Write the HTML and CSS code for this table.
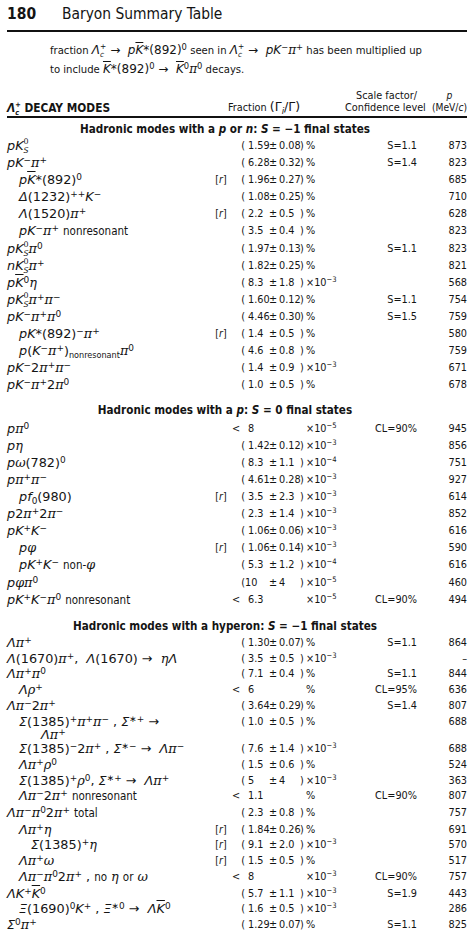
FILE: index.html
```html
<!DOCTYPE html>
<html lang="en">
<head>
<meta charset="utf-8">
<title>Baryon Summary Table</title>
<link rel="stylesheet" href="styles.css">
</head>
<body>
<div class="page">
  <header class="running"><span class="pgno">180</span><span class="ptitle">Baryon Summary Table</span></header>

  <p class="note">fraction <span class="m"><var>Λ</var><span class="ss"><span>+</span><var>c</var></span> → &nbsp;<var>p</var><var class="bar">K</var>*(892)<sup>0</sup></span> seen in <span class="m"><var>Λ</var><span class="ss"><span>+</span><var>c</var></span> → &nbsp;<var>p</var><var>K</var><sup>−</sup><i>π</i><sup>+</sup></span> has been multiplied up<br>to include <span class="m"><var class="bar">K</var>*(892)<sup>0</sup> → &nbsp;<var class="bar">K</var><sup>0</sup><i>π</i><sup>0</sup></span> decays.</p>

  <div class="thead">
    <div class="h-mode"><var>Λ</var><span class="ss"><span>+</span><var>c</var></span> DECAY MODES</div>
    <div class="h-frac">Fraction <span class="hm">(Γ<sub><var>i</var></sub>/Γ)</span></div>
    <div class="h-sc">Scale factor/<br>Confidence level</div>
    <div class="h-p"><span class="stack"><var>p</var><br>(MeV/<var>c</var>)</span></div>
  </div>

  <section class="sec s1">
    <h2>Hadronic modes with a <var>p</var> or <var>n</var>: <var>S</var> = −1 final states</h2>

    <div class="row"><div class="mode"><var>p</var><var>K</var><span class="ss"><span>0</span><var>S</var></span></div><div class="r"></div><div class="frac"><span class="o">(</span><span class="v">1.59</span><span class="pm">±</span><span class="e">0.08</span><span class="c">)</span><span class="u">%</span></div><div class="sc">S=1.1</div><div class="pc">873</div></div>

    <div class="row"><div class="mode"><var>p</var><var>K</var><sup>−</sup><i>π</i><sup>+</sup></div><div class="r"></div><div class="frac"><span class="o">(</span><span class="v">6.28</span><span class="pm">±</span><span class="e">0.32</span><span class="c">)</span><span class="u">%</span></div><div class="sc">S=1.4</div><div class="pc">823</div></div>

    <div class="row"><div class="mode l1"><var>p</var><var class="bar">K</var>*(892)<sup>0</sup></div><div class="r">[<var>r</var>]</div><div class="frac"><span class="o">(</span><span class="v">1.96</span><span class="pm">±</span><span class="e">0.27</span><span class="c">)</span><span class="u">%</span></div><div class="sc"></div><div class="pc">685</div></div>

    <div class="row"><div class="mode l1"><var>Δ</var>(1232)<sup>++</sup><var>K</var><sup>−</sup></div><div class="r"></div><div class="frac"><span class="o">(</span><span class="v">1.08</span><span class="pm">±</span><span class="e">0.25</span><span class="c">)</span><span class="u">%</span></div><div class="sc"></div><div class="pc">710</div></div>

    <div class="row"><div class="mode l1"><var>Λ</var>(1520)<i>π</i><sup>+</sup></div><div class="r">[<var>r</var>]</div><div class="frac"><span class="o">(</span><span class="v">2.2</span><span class="pm">±</span><span class="e">0.5</span><span class="c">)</span><span class="u">%</span></div><div class="sc"></div><div class="pc">628</div></div>

    <div class="row"><div class="mode l1"><var>p</var><var>K</var><sup>−</sup><i>π</i><sup>+</sup> <span class="t">nonresonant</span></div><div class="r"></div><div class="frac"><span class="o">(</span><span class="v">3.5</span><span class="pm">±</span><span class="e">0.4</span><span class="c">)</span><span class="u">%</span></div><div class="sc"></div><div class="pc">823</div></div>

    <div class="row"><div class="mode"><var>p</var><var>K</var><span class="ss"><span>0</span><var>S</var></span><i>π</i><sup>0</sup></div><div class="r"></div><div class="frac"><span class="o">(</span><span class="v">1.97</span><span class="pm">±</span><span class="e">0.13</span><span class="c">)</span><span class="u">%</span></div><div class="sc">S=1.1</div><div class="pc">823</div></div>

    <div class="row"><div class="mode"><var>n</var><var>K</var><span class="ss"><span>0</span><var>S</var></span><i>π</i><sup>+</sup></div><div class="r"></div><div class="frac"><span class="o">(</span><span class="v">1.82</span><span class="pm">±</span><span class="e">0.25</span><span class="c">)</span><span class="u">%</span></div><div class="sc"></div><div class="pc">821</div></div>

    <div class="row"><div class="mode"><var>p</var><var class="bar">K</var><sup>0</sup><i>η</i></div><div class="r"></div><div class="frac"><span class="o">(</span><span class="v">8.3</span><span class="pm">±</span><span class="e">1.8</span><span class="c">)</span><span class="u">×10<sup>−3</sup></span></div><div class="sc"></div><div class="pc">568</div></div>

    <div class="row"><div class="mode"><var>p</var><var>K</var><span class="ss"><span>0</span><var>S</var></span><i>π</i><sup>+</sup><i>π</i><sup>−</sup></div><div class="r"></div><div class="frac"><span class="o">(</span><span class="v">1.60</span><span class="pm">±</span><span class="e">0.12</span><span class="c">)</span><span class="u">%</span></div><div class="sc">S=1.1</div><div class="pc">754</div></div>

    <div class="row"><div class="mode"><var>p</var><var>K</var><sup>−</sup><i>π</i><sup>+</sup><i>π</i><sup>0</sup></div><div class="r"></div><div class="frac"><span class="o">(</span><span class="v">4.46</span><span class="pm">±</span><span class="e">0.30</span><span class="c">)</span><span class="u">%</span></div><div class="sc">S=1.5</div><div class="pc">759</div></div>

    <div class="row"><div class="mode l1"><var>p</var><var>K</var>*(892)<sup>−</sup><i>π</i><sup>+</sup></div><div class="r">[<var>r</var>]</div><div class="frac"><span class="o">(</span><span class="v">1.4</span><span class="pm">±</span><span class="e">0.5</span><span class="c">)</span><span class="u">%</span></div><div class="sc"></div><div class="pc">580</div></div>

    <div class="row"><div class="mode l1"><var>p</var>(<var>K</var><sup>−</sup><i>π</i><sup>+</sup>)<sub class="t">nonresonant</sub><i>π</i><sup>0</sup></div><div class="r"></div><div class="frac"><span class="o">(</span><span class="v">4.6</span><span class="pm">±</span><span class="e">0.8</span><span class="c">)</span><span class="u">%</span></div><div class="sc"></div><div class="pc">759</div></div>

    <div class="row"><div class="mode"><var>p</var><var>K</var><sup>−</sup>2<i>π</i><sup>+</sup><i>π</i><sup>−</sup></div><div class="r"></div><div class="frac"><span class="o">(</span><span class="v">1.4</span><span class="pm">±</span><span class="e">0.9</span><span class="c">)</span><span class="u">×10<sup>−3</sup></span></div><div class="sc"></div><div class="pc">671</div></div>

    <div class="row"><div class="mode"><var>p</var><var>K</var><sup>−</sup><i>π</i><sup>+</sup>2<i>π</i><sup>0</sup></div><div class="r"></div><div class="frac"><span class="o">(</span><span class="v">1.0</span><span class="pm">±</span><span class="e">0.5</span><span class="c">)</span><span class="u">%</span></div><div class="sc"></div><div class="pc">678</div></div>
  </section>

  <section class="sec s2">
    <h2>Hadronic modes with a <var>p</var>: <var>S</var> = 0 final states</h2>

    <div class="row"><div class="mode"><var>p</var><i>π</i><sup>0</sup></div><div class="r"></div><div class="frac"><span class="o lt">&lt;</span><span class="v">8</span><span class="pm"></span><span class="e"></span><span class="c"></span><span class="u">×10<sup>−5</sup></span></div><div class="sc">CL=90%</div><div class="pc">945</div></div>

    <div class="row"><div class="mode"><var>p</var><i>η</i></div><div class="r"></div><div class="frac"><span class="o">(</span><span class="v">1.42</span><span class="pm">±</span><span class="e">0.12</span><span class="c">)</span><span class="u">×10<sup>−3</sup></span></div><div class="sc"></div><div class="pc">856</div></div>

    <div class="row"><div class="mode"><var>p</var><i>ω</i>(782)<sup>0</sup></div><div class="r"></div><div class="frac"><span class="o">(</span><span class="v">8.3</span><span class="pm">±</span><span class="e">1.1</span><span class="c">)</span><span class="u">×10<sup>−4</sup></span></div><div class="sc"></div><div class="pc">751</div></div>

    <div class="row"><div class="mode"><var>p</var><i>π</i><sup>+</sup><i>π</i><sup>−</sup></div><div class="r"></div><div class="frac"><span class="o">(</span><span class="v">4.61</span><span class="pm">±</span><span class="e">0.28</span><span class="c">)</span><span class="u">×10<sup>−3</sup></span></div><div class="sc"></div><div class="pc">927</div></div>

    <div class="row"><div class="mode l1"><var>p</var><var>f</var><sub>0</sub>(980)</div><div class="r">[<var>r</var>]</div><div class="frac"><span class="o">(</span><span class="v">3.5</span><span class="pm">±</span><span class="e">2.3</span><span class="c">)</span><span class="u">×10<sup>−3</sup></span></div><div class="sc"></div><div class="pc">614</div></div>

    <div class="row"><div class="mode"><var>p</var>2<i>π</i><sup>+</sup>2<i>π</i><sup>−</sup></div><div class="r"></div><div class="frac"><span class="o">(</span><span class="v">2.3</span><span class="pm">±</span><span class="e">1.4</span><span class="c">)</span><span class="u">×10<sup>−3</sup></span></div><div class="sc"></div><div class="pc">852</div></div>

    <div class="row"><div class="mode"><var>p</var><var>K</var><sup>+</sup><var>K</var><sup>−</sup></div><div class="r"></div><div class="frac"><span class="o">(</span><span class="v">1.06</span><span class="pm">±</span><span class="e">0.06</span><span class="c">)</span><span class="u">×10<sup>−3</sup></span></div><div class="sc"></div><div class="pc">616</div></div>

    <div class="row"><div class="mode l1"><var>p</var><i>φ</i></div><div class="r">[<var>r</var>]</div><div class="frac"><span class="o">(</span><span class="v">1.06</span><span class="pm">±</span><span class="e">0.14</span><span class="c">)</span><span class="u">×10<sup>−3</sup></span></div><div class="sc"></div><div class="pc">590</div></div>

    <div class="row"><div class="mode l1"><var>p</var><var>K</var><sup>+</sup><var>K</var><sup>−</sup> <span class="t">non-</span><i>φ</i></div><div class="r"></div><div class="frac"><span class="o">(</span><span class="v">5.3</span><span class="pm">±</span><span class="e">1.2</span><span class="c">)</span><span class="u">×10<sup>−4</sup></span></div><div class="sc"></div><div class="pc">616</div></div>

    <div class="row"><div class="mode"><var>p</var><i>φ</i><i>π</i><sup>0</sup></div><div class="r"></div><div class="frac"><span class="o">(</span><span class="v w2">10</span><span class="pm">±</span><span class="e">4</span><span class="c">)</span><span class="u">×10<sup>−5</sup></span></div><div class="sc"></div><div class="pc">460</div></div>

    <div class="row"><div class="mode"><var>p</var><var>K</var><sup>+</sup><var>K</var><sup>−</sup><i>π</i><sup>0</sup> <span class="t">nonresonant</span></div><div class="r"></div><div class="frac"><span class="o lt">&lt;</span><span class="v">6.3</span><span class="pm"></span><span class="e"></span><span class="c"></span><span class="u">×10<sup>−5</sup></span></div><div class="sc">CL=90%</div><div class="pc">494</div></div>
  </section>

  <section class="sec s3">
    <h2>Hadronic modes with a hyperon: <var>S</var> = −1 final states</h2>

    <div class="row"><div class="mode"><var>Λ</var><i>π</i><sup>+</sup></div><div class="r"></div><div class="frac"><span class="o">(</span><span class="v">1.30</span><span class="pm">±</span><span class="e">0.07</span><span class="c">)</span><span class="u">%</span></div><div class="sc">S=1.1</div><div class="pc">864</div></div>

    <div class="row"><div class="mode"><var>Λ</var>(1670)<i>π</i><sup>+</sup>, &nbsp;<var>Λ</var>(1670) → &nbsp;<i>η</i><var>Λ</var></div><div class="r"></div><div class="frac"><span class="o">(</span><span class="v">3.5</span><span class="pm">±</span><span class="e">0.5</span><span class="c">)</span><span class="u">×10<sup>−3</sup></span></div><div class="sc"></div><div class="pc">–</div></div>

    <div class="row"><div class="mode"><var>Λ</var><i>π</i><sup>+</sup><i>π</i><sup>0</sup></div><div class="r"></div><div class="frac"><span class="o">(</span><span class="v">7.1</span><span class="pm">±</span><span class="e">0.4</span><span class="c">)</span><span class="u">%</span></div><div class="sc">S=1.1</div><div class="pc">844</div></div>

    <div class="row"><div class="mode l1"><var>Λ</var><i>ρ</i><sup>+</sup></div><div class="r"></div><div class="frac"><span class="o lt">&lt;</span><span class="v">6</span><span class="pm"></span><span class="e"></span><span class="c"></span><span class="u">%</span></div><div class="sc">CL=95%</div><div class="pc">636</div></div>

    <div class="row"><div class="mode"><var>Λ</var><i>π</i><sup>−</sup>2<i>π</i><sup>+</sup></div><div class="r"></div><div class="frac"><span class="o">(</span><span class="v">3.64</span><span class="pm">±</span><span class="e">0.29</span><span class="c">)</span><span class="u">%</span></div><div class="sc">S=1.4</div><div class="pc">807</div></div>

    <div class="row"><div class="mode l1"><var>Σ</var>(1385)<sup>+</sup><i>π</i><sup>+</sup><i>π</i><sup>−</sup> , <var>Σ</var><sup>∗+</sup> → <span class="cont"><var>Λ</var><i>π</i><sup>+</sup></span></div><div class="r"></div><div class="frac"><span class="o">(</span><span class="v">1.0</span><span class="pm">±</span><span class="e">0.5</span><span class="c">)</span><span class="u">%</span></div><div class="sc"></div><div class="pc">688</div></div>

    <div class="row"><div class="mode l1"><var>Σ</var>(1385)<sup>−</sup>2<i>π</i><sup>+</sup> , <var>Σ</var><sup>∗−</sup> → &nbsp;<var>Λ</var><i>π</i><sup>−</sup></div><div class="r"></div><div class="frac"><span class="o">(</span><span class="v">7.6</span><span class="pm">±</span><span class="e">1.4</span><span class="c">)</span><span class="u">×10<sup>−3</sup></span></div><div class="sc"></div><div class="pc">688</div></div>

    <div class="row"><div class="mode l1"><var>Λ</var><i>π</i><sup>+</sup><i>ρ</i><sup>0</sup></div><div class="r"></div><div class="frac"><span class="o">(</span><span class="v">1.5</span><span class="pm">±</span><span class="e">0.6</span><span class="c">)</span><span class="u">%</span></div><div class="sc"></div><div class="pc">524</div></div>

    <div class="row"><div class="mode l1"><var>Σ</var>(1385)<sup>+</sup><i>ρ</i><sup>0</sup>, <var>Σ</var><sup>∗+</sup> → &nbsp;<var>Λ</var><i>π</i><sup>+</sup></div><div class="r"></div><div class="frac"><span class="o">(</span><span class="v">5</span><span class="pm">±</span><span class="e">4</span><span class="c">)</span><span class="u">×10<sup>−3</sup></span></div><div class="sc"></div><div class="pc">363</div></div>

    <div class="row"><div class="mode l1"><var>Λ</var><i>π</i><sup>−</sup>2<i>π</i><sup>+</sup> <span class="t">nonresonant</span></div><div class="r"></div><div class="frac"><span class="o lt">&lt;</span><span class="v">1.1</span><span class="pm"></span><span class="e"></span><span class="c"></span><span class="u">%</span></div><div class="sc">CL=90%</div><div class="pc">807</div></div>

    <div class="row"><div class="mode"><var>Λ</var><i>π</i><sup>−</sup><i>π</i><sup>0</sup>2<i>π</i><sup>+</sup> <span class="t">total</span></div><div class="r"></div><div class="frac"><span class="o">(</span><span class="v">2.3</span><span class="pm">±</span><span class="e">0.8</span><span class="c">)</span><span class="u">%</span></div><div class="sc"></div><div class="pc">757</div></div>

    <div class="row"><div class="mode l1"><var>Λ</var><i>π</i><sup>+</sup><i>η</i></div><div class="r">[<var>r</var>]</div><div class="frac"><span class="o">(</span><span class="v">1.84</span><span class="pm">±</span><span class="e">0.26</span><span class="c">)</span><span class="u">%</span></div><div class="sc"></div><div class="pc">691</div></div>

    <div class="row"><div class="mode l2"><var>Σ</var>(1385)<sup>+</sup><i>η</i></div><div class="r">[<var>r</var>]</div><div class="frac"><span class="o">(</span><span class="v">9.1</span><span class="pm">±</span><span class="e">2.0</span><span class="c">)</span><span class="u">×10<sup>−3</sup></span></div><div class="sc"></div><div class="pc">570</div></div>

    <div class="row"><div class="mode l1"><var>Λ</var><i>π</i><sup>+</sup><i>ω</i></div><div class="r">[<var>r</var>]</div><div class="frac"><span class="o">(</span><span class="v">1.5</span><span class="pm">±</span><span class="e">0.5</span><span class="c">)</span><span class="u">%</span></div><div class="sc"></div><div class="pc">517</div></div>

    <div class="row"><div class="mode l1"><var>Λ</var><i>π</i><sup>−</sup><i>π</i><sup>0</sup>2<i>π</i><sup>+</sup> , <span class="t">no</span> <i>η</i> <span class="t">or</span> <i>ω</i></div><div class="r"></div><div class="frac"><span class="o lt">&lt;</span><span class="v">8</span><span class="pm"></span><span class="e"></span><span class="c"></span><span class="u">×10<sup>−3</sup></span></div><div class="sc">CL=90%</div><div class="pc">757</div></div>

    <div class="row"><div class="mode"><var>Λ</var><var>K</var><sup>+</sup><var class="bar">K</var><sup>0</sup></div><div class="r"></div><div class="frac"><span class="o">(</span><span class="v">5.7</span><span class="pm">±</span><span class="e">1.1</span><span class="c">)</span><span class="u">×10<sup>−3</sup></span></div><div class="sc">S=1.9</div><div class="pc">443</div></div>

    <div class="row"><div class="mode l1"><var>Ξ</var>(1690)<sup>0</sup><var>K</var><sup>+</sup> , <var>Ξ</var><sup>∗0</sup> → &nbsp;<var>Λ</var><var class="bar">K</var><sup>0</sup></div><div class="r"></div><div class="frac"><span class="o">(</span><span class="v">1.6</span><span class="pm">±</span><span class="e">0.5</span><span class="c">)</span><span class="u">×10<sup>−3</sup></span></div><div class="sc"></div><div class="pc">286</div></div>

    <div class="row"><div class="mode"><var>Σ</var><sup>0</sup><i>π</i><sup>+</sup></div><div class="r"></div><div class="frac"><span class="o">(</span><span class="v">1.29</span><span class="pm">±</span><span class="e">0.07</span><span class="c">)</span><span class="u">%</span></div><div class="sc">S=1.1</div><div class="pc">825</div></div>
  </section>
</div>
</body>
</html>
```

FILE: styles.css
```css
:root {
  --row: 17px;
  --cols: 205px 18px 115px 72px 50px;
}

* { box-sizing: border-box; }

html, body {
  margin: 0;
  background: #ffffff;
}

body {
  color: #141414;
  font-family: "DejaVu Sans Condensed", "DejaVu Sans", sans-serif;
  font-stretch: condensed;
  font-size: 10.8px;
}

.page {
  width: 474px;
  height: 932px;
  padding: 0 7px;
  overflow: hidden;
}

/* running head */
.running {
  display: flex;
  align-items: baseline;
  height: 32px;
  padding-top: 6px;
  line-height: 17px;
  border-bottom: 2px solid #111;
}
.pgno {
  width: 55px;
  font-weight: bold;
  font-size: 15.5px;
}
.ptitle {
  font-size: 15.4px;
}

/* note paragraph */
.note {
  margin: 0 0 0 43px;
  padding-top: 9px;
  line-height: 19px;
  font-size: 11.2px;
}

/* math runs */
.m, .mode, .hm {
  font-family: "DejaVu Sans", sans-serif;
  font-stretch: normal;
}
.m { font-size: 12px; }
.hm { font-size: 12.5px; }

var {
  font-style: oblique;
}
i {
  font-family: "DejaVu Serif", serif;
  font-style: italic;
}
.bar {
  text-decoration: overline;
  text-decoration-thickness: 1px;
}
sup {
  font-size: 70%;
  line-height: 0;
  vertical-align: 0.5em;
}
sub {
  font-size: 70%;
  line-height: 0;
  vertical-align: -0.3em;
}
.ss {
  display: inline-flex;
  flex-direction: column;
  font-size: 62%;
  line-height: 1.06;
  vertical-align: middle;
  margin: -1.1em 0;
}

.t {
  font-family: "DejaVu Sans Condensed", "DejaVu Sans", sans-serif;
  font-stretch: condensed;
  font-size: 11.5px;
}
sub.t { font-size: 9px; }

/* table header */
.thead {
  display: grid;
  grid-template-columns: var(--cols);
  align-items: end;
  margin-top: 11px;
  padding-bottom: 2px;
  border-bottom: 2px solid #111;
  line-height: 12px;
}
.h-mode {
  font-weight: bold;
  font-size: 11.8px;
}
.h-frac {
  grid-column: 2 / 4;
  padding-left: 16px;
  white-space: nowrap;
}
.h-sc {
  text-align: right;
  white-space: nowrap;
}
.h-p {
  text-align: right;
  font-size: 10.2px;
}
.stack {
  display: inline-block;
  text-align: center;
}

/* sections */
.sec h2 {
  margin: 0;
  padding: 9px 24px 0 0;
  line-height: 17.5px;
  font-size: 11.6px;
  font-weight: bold;
  text-align: center;
}
.sec.s1 h2 {
  padding-top: 3px;
  line-height: 16px;
}
.sec.s3 { --row: 15.7px; }

.row {
  display: grid;
  grid-template-columns: var(--cols);
  line-height: var(--row);
  white-space: nowrap;
}
.mode {
  font-size: 12.8px;
}
.mode.l1 { padding-left: 12px; }
.mode.l2 { padding-left: 24px; }
.cont {
  display: block;
  padding-left: 22px;
  line-height: 12px;
}

.r {
  text-align: center;
  font-size: 10.5px;
}

.frac {
  display: flex;
  font-size: 10.8px;
}
.o { flex: none; width: 15px; text-align: right; }
.o.lt { text-align: left; padding-left: 2px; }
.v { flex: none; width: 24px; padding-left: 3px; }
.v.w2 { padding-left: 0; }
.pm { flex: none; width: 8px; }
.e { flex: none; width: 23px; padding-left: 2px; }
.c { flex: none; width: 6px; }

.sc, .pc {
  text-align: right;
  font-size: 10.8px;
}
```
